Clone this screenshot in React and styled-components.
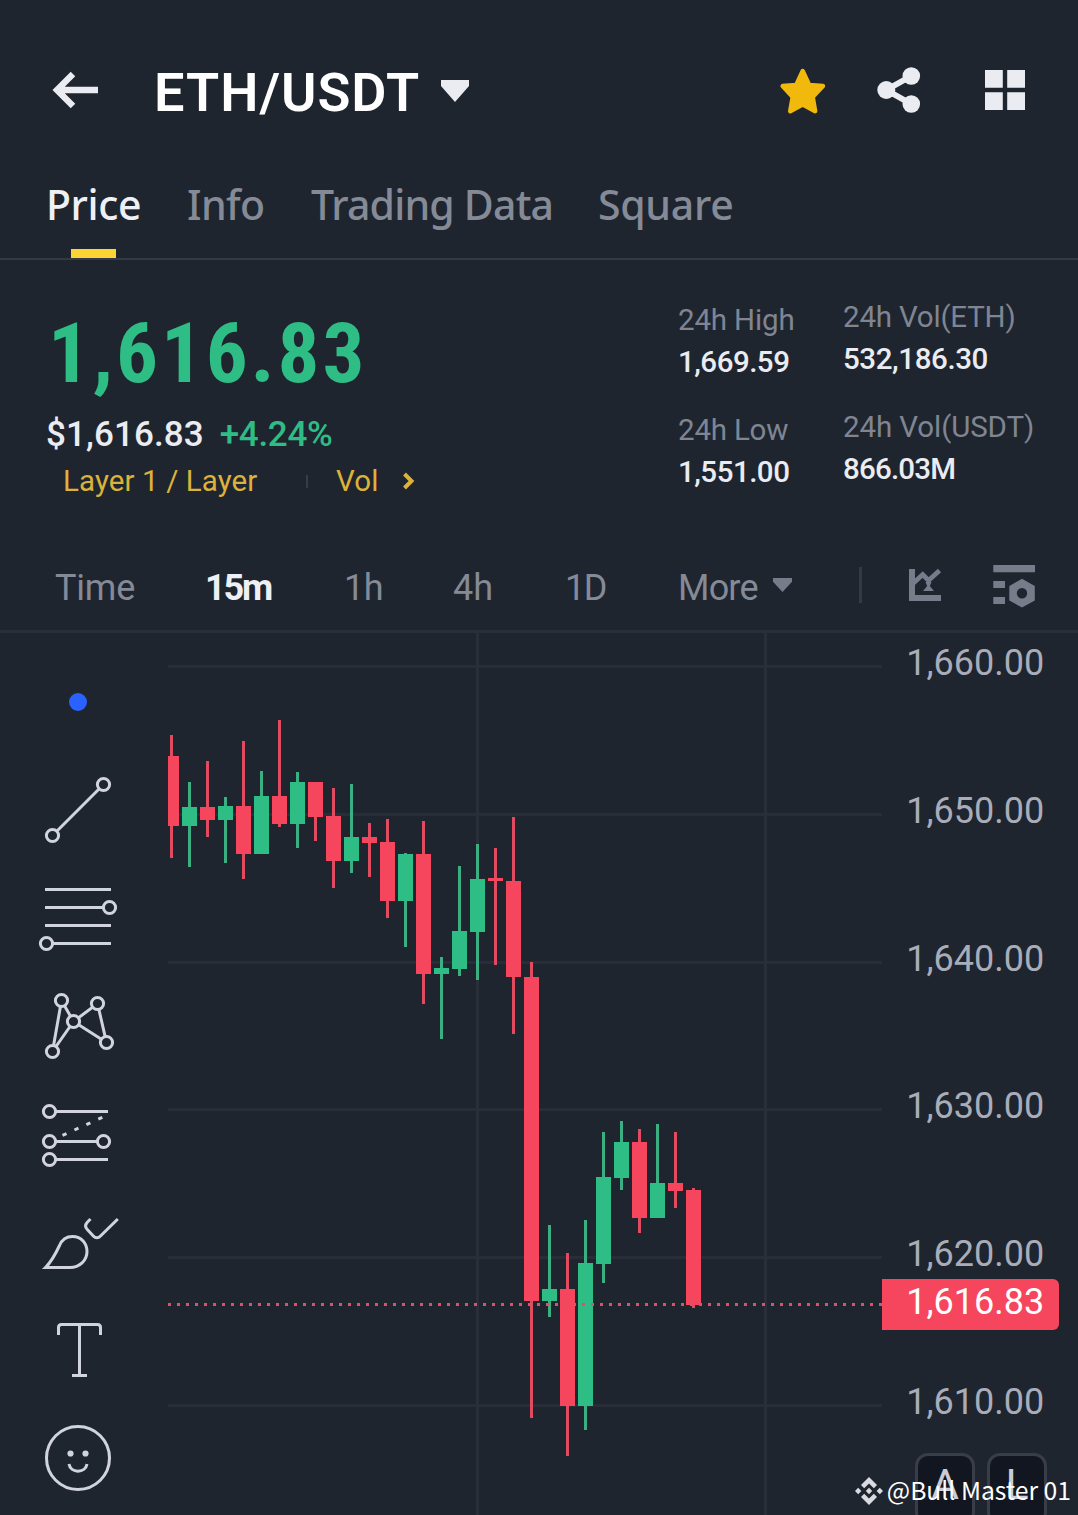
import styled, { createGlobalStyle } from 'styled-components';

const GlobalStyle = createGlobalStyle`
    * {
        box-sizing: border-box;
    }
    body {
        margin: 0;
        background-color: #1f252f;
        font-family: Roboto, 'Liberation Sans', sans-serif;
        color: #eaecf2;
        overflow: hidden;
    }
    svg {
        display: block;
        flex-shrink: 0;
    }
`;

const Page = styled.div`
    position: relative;
    width: 1078px;
    height: 1515px;
    overflow: hidden;
    background-color: #1f252f;
`;

/* header */
const Header = styled.header`
    display: flex;
    align-items: center;
    height: 182px;
    padding: 0 48px 0 48px;
`;

const Pair = styled.h1`
    margin: 3px 0 0 50px;
    width: 287px;
    font-size: 54px;
    line-height: 60px;
    font-weight: 600;
    letter-spacing: ${(props) => props.$spacing}px;
    color: #ffffff;
    white-space: nowrap;
`;

const HeaderActions = styled.div`
    display: flex;
    align-items: center;
    gap: 44px;
    margin-left: auto;
`;

/* tabs */
const TabBar = styled.nav`
    display: grid;
    grid-template-columns: 141px 124px 287px 140px;
    height: 78px;
    padding-left: 46px;
    border-bottom: 2px solid #343a45;
`;

const Tab = styled.div`
    display: flex;
    flex-direction: column;
    justify-content: space-between;
    align-items: center;
    justify-self: start;
    font-family: 'Noto Sans', sans-serif;
    font-size: 41px;
    line-height: 45px;
    font-weight: 500;
    letter-spacing: ${(props) => props.$spacing}px;
    white-space: nowrap;
    color: ${(props) => (props.$active ? '#eff0f6' : '#858a97')};

    &::after {
        content: '';
        width: 45px;
        height: 9px;
        background-color: ${(props) => (props.$active ? '#fcd535' : 'transparent')};
    }
`;

/* summary */
const Summary = styled.section`
    display: flex;
    height: 285px;
`;

const PriceBlock = styled.div`
    width: 678px;
    padding: 52px 0 0 46px;
`;

const LastPrice = styled.div`
    height: 84px;
    padding-left: 2px;
    font-size: 83px;
    line-height: 84px;
    font-weight: 700;
    font-stretch: 80%;
    letter-spacing: 2.9px;
    color: #2ebd85;
`;

const SubPrice = styled.div`
    display: flex;
    gap: 16px;
    margin-top: 13px;
    height: 49px;
    font-size: 35px;
    line-height: 51px;
    font-weight: 500;
    letter-spacing: 0.1px;
`;

const Change = styled.span`
    color: #2ebd85;
    letter-spacing: -0.3px;
`;

const TagRow = styled.div`
    display: flex;
    align-items: center;
    padding-left: 17px;
    height: 46px;
    font-size: 29.5px;
    color: #dcb23a;
`;

const Tag = styled.span`
    width: ${(props) => props.$width}px;
    line-height: 46px;
    letter-spacing: ${(props) => props.$spacing}px;
    white-space: nowrap;
`;

const TagDivider = styled.span`
    width: 2px;
    height: 13px;
    margin-right: 28px;
    background-color: #363c48;
`;

const StatColumn = styled.div`
    display: flex;
    flex-direction: column;
    gap: 26px;
    width: ${(props) => props.$width}px;
    padding-top: ${(props) => props.$top}px;
`;

const Stat = styled.div`
    font-size: 29.5px;
    line-height: 42px;
    white-space: nowrap;
`;

const StatLabel = styled.div`
    color: #7f8592;
    letter-spacing: ${(props) => props.$spacing}px;
`;

const StatValue = styled.div`
    font-weight: 500;
    letter-spacing: ${(props) => props.$spacing}px;
`;

/* intervals */
const IntervalBar = styled.div`
    display: grid;
    grid-template-columns: 150px 139px 109px 112px 113px 181px 50px 84px 43px;
    align-items: center;
    height: 88px;
    padding-left: 55px;
    border-bottom: 3px solid #2a2e39;

    & > svg {
        margin-bottom: 1px;
    }
`;

const Interval = styled.span`
    display: flex;
    align-items: center;
    gap: 15px;
    font-size: 36px;
    line-height: 44px;
    font-weight: ${(props) => (props.$active ? 700 : 400)};
    letter-spacing: ${(props) => props.$spacing}px;
    color: ${(props) => (props.$active ? '#eff0f6' : '#858a97')};

    & > svg {
        margin-bottom: 6px;
    }
`;

const BarDivider = styled.i`
    width: 3px;
    height: 36px;
    margin-bottom: 5px;
    background-color: #343944;
`;

/* chart */
const ChartArea = styled.section`
    display: flex;
    height: 882px;
`;

const ToolColumn = styled.div`
    display: flex;
    flex-direction: column;
    width: 168px;
    padding: 15px 0 0 24px;
`;

const PriceAxis = styled.div`
    position: relative;
    width: 196px;
    padding-top: 8px;
`;

const AxisLabel = styled.div`
    height: 147.8px;
    padding-left: 24.3px;
    font-size: 36px;
    line-height: 44px;
    color: #a9adb9;
`;

const PriceTag = styled.div`
    position: absolute;
    left: 0;
    top: 646px;
    width: 177px;
    height: 51px;
    padding-left: 24.3px;
    border-radius: 0 6px 6px 0;
    background-color: #f6465d;
    font-size: 36px;
    line-height: 47px;
    color: #ffffff;
`;

const ScaleButtons = styled.div`
    position: absolute;
    left: 33px;
    top: 820px;
    display: flex;
    gap: 12px;
`;

const ScaleButton = styled.div`
    width: 60px;
    height: 72px;
    border: 3px solid #393d48;
    border-radius: 13px;
    background-color: #121620;
    text-align: center;
    font-size: 43px;
    line-height: 56px;
    font-weight: 400;
    color: #c9ccd6;
`;

const Watermark = styled.div`
    position: absolute;
    right: 7px;
    top: 1472px;
    display: flex;
    align-items: center;
    gap: 4px;
    font-family: 'Noto Sans CJK SC', sans-serif;
    font-size: 24.7px;
    line-height: 34px;
    color: #ffffff;
    white-space: nowrap;

    & > svg {
        margin-top: 4px;
    }
`;

// color, high, body top, body bottom, low
const candles = [
    ['r', 735, 756, 826, 858],
    ['g', 782, 807, 826, 867],
    ['r', 761, 807, 820, 837],
    ['g', 797, 806, 820, 863],
    ['r', 741, 806, 854, 879],
    ['g', 771, 796, 854, 854],
    ['r', 720, 796, 824, 827],
    ['g', 772, 782, 824, 848],
    ['r', 782, 782, 817, 841],
    ['r', 788, 816, 861, 888],
    ['g', 784, 837, 861, 873],
    ['r', 823, 837, 843, 877],
    ['r', 819, 842, 901, 918],
    ['g', 853, 854, 901, 947],
    ['r', 821, 854, 974, 1004],
    ['g', 957, 968, 974, 1039],
    ['g', 866, 931, 969, 976],
    ['g', 844, 879, 932, 980],
    ['r', 848, 878, 881, 965],
    ['r', 817, 881, 977, 1034],
    ['r', 962, 977, 1301, 1418],
    ['g', 1225, 1289, 1301, 1317],
    ['r', 1253, 1289, 1406, 1456],
    ['g', 1220, 1263, 1406, 1430],
    ['g', 1132, 1177, 1264, 1283],
    ['g', 1121, 1142, 1178, 1190],
    ['r', 1129, 1142, 1218, 1233],
    ['g', 1124, 1183, 1218, 1218],
    ['r', 1132, 1183, 1191, 1208],
    ['r', 1188, 1190, 1305, 1308],
];

const colors = { r: '#f6465d', g: '#2ebd85' };
const wickColors = { r: '#e04b5f', g: '#3caf82' };
const prices = ['1,660.00', '1,650.00', '1,640.00', '1,630.00', '1,620.00', '1,610.00'];
const gridRows = [665, 813, 961, 1108, 1256, 1404];

function BackIcon() {
    return (
        <svg width="56" height="60" viewBox="48 61 56 60" fill="none" stroke="#eaecf2" strokeWidth="6.4">
            <path d="M98 90H58M73 74L57 90L73 106" />
        </svg>
    );
}

function CaretIcon({ width, height, color }) {
    return (
        <svg width={width} height={height} viewBox="0 0 28 22" preserveAspectRatio="none" fill={color}>
            <path d="M0 0H28V6L14 22L0 6Z" />
        </svg>
    );
}

function StarIcon() {
    return (
        <svg width="52" height="60" viewBox="777 61 52 60">
            <path
                d="M802.7 71L809.2 84.9L823 86L812.7 97L815.2 111.2L802.7 104.6L790.2 111.2L792.7 97L782.6 86L796.2 84.9Z"
                fill="#f0b90b"
                stroke="#f0b90b"
                strokeWidth="4.4"
                strokeLinejoin="round"
            />
        </svg>
    );
}

function ShareIcon() {
    return (
        <svg width="52" height="60" viewBox="873 61 52 60" fill="#eaecf2">
            <path d="M911.3 76L886.3 90L911.3 104" fill="none" stroke="#eaecf2" strokeWidth="6" />
            <circle cx="911.3" cy="76" r="8.8" />
            <circle cx="886.3" cy="90" r="9" />
            <circle cx="911.3" cy="104" r="8.8" />
        </svg>
    );
}

function GridIcon() {
    return (
        <svg width="61" height="60" viewBox="969 61 61 60" fill="#eaecf2">
            <path d="M985 70H1002.8V87.7H985ZM1007.2 70H1025V87.7H1007.2ZM985 92.2H1002.8V110H985ZM1007.2 92.2H1025V110H1007.2Z" />
        </svg>
    );
}

function IndicatorIcon() {
    return (
        <svg width="34" height="44" viewBox="909 565 34 44" fill="#777c8b">
            <path d="M909 569H915V595H941V601H909Z" />
            <path d="M913 583.5L922.7 574.5L928.5 580.5L939.5 570.5" fill="none" stroke="#777c8b" strokeWidth="4.8" />
            <path d="M925.5 582H931.5L929.8 586L934 591H923L927.2 586Z" />
        </svg>
    );
}

function SettingsIcon() {
    return (
        <svg width="43" height="44" viewBox="993 565 43 44" fill="#777c8b">
            <path d="M993.3 565H1035V572.3H993.3ZM993.3 581H1005V588H993.3ZM993.3 597H1005V604H993.3Z" />
            <path
                fillRule="evenodd"
                d="M1022 578.7L1034.8 586V600.5L1022 607.6L1009.3 600.5V586ZM1022 588A5.2 5.2 0 1 0 1022 598.4A5.2 5.2 0 1 0 1022 588Z"
            />
        </svg>
    );
}

function Tool({ children }) {
    return (
        <svg width="108" height="108" viewBox="0 0 108 108" fill="none" stroke="#d1d4de" strokeWidth="3">
            {children}
        </svg>
    );
}

function Knob({ x, y }) {
    return <circle cx={x} cy={y} r="6.1" fill="#1f252f" />;
}

function DrawingTools() {
    return (
        <ToolColumn>
            <Tool>
                <circle cx="54" cy="54" r="9" fill="#2962ff" stroke="none" />
            </Tool>
            <Tool>
                <path d="M28.5 79.5L79.5 28.5" />
                <Knob x="79.5" y="28.5" />
                <Knob x="28.5" y="79.5" />
            </Tool>
            <Tool>
                <path d="M21 25.5H87M21 43.5H85M21 61.5H87M22 79.5H87" />
                <Knob x="85.5" y="43.5" />
                <Knob x="22.5" y="79.5" />
            </Tool>
            <Tool>
                <path d="M28.5 79.5L37.5 28.5L49.5 49.5ZM49.5 49.5L73.5 31.5L82.5 70.5Z" />
                <Knob x="28.5" y="79.5" />
                <Knob x="37.5" y="28.5" />
                <Knob x="49.5" y="49.5" />
                <Knob x="73.5" y="31.5" />
                <Knob x="82.5" y="70.5" />
            </Tool>
            <Tool>
                <path d="M25.5 31.5H84M25.5 61.5H79.5M25.5 79.5H84" />
                <path d="M38.5 55.4L80 36.6" strokeDasharray="4.4 8.7" />
                <Knob x="25.5" y="31.5" />
                <Knob x="25.5" y="61.5" />
                <Knob x="79.5" y="61.5" />
                <Knob x="25.5" y="79.5" />
            </Tool>
            <Tool>
                <path d="M21.5 79.5C28 73 32 65 35.5 57.5C38 51.5 42 48.5 48.5 48.5C57.5 48.5 63 55.5 63 63.5C63 72.5 55.5 79.5 46 79.5Z" />
                <path d="M66.5 31L63.3 34.2C61 36.8 61 39.2 63.3 41.5L69.3 48C71.5 50.4 74.3 50.4 76.5 48L93.8 31" />
            </Tool>
            <Tool>
                <path d="M34.5 39V31.5Q34.5 28.5 37.5 28.5H73.5Q76.5 28.5 76.5 31.5V39M55.5 28.5V79.5M48 79.5H63" />
            </Tool>
            <Tool>
                <circle cx="54" cy="54" r="31.5" />
                <circle cx="46.5" cy="49.5" r="3.1" fill="#d1d4de" stroke="none" />
                <circle cx="61.5" cy="49.5" r="3.1" fill="#d1d4de" stroke="none" />
                <path d="M45 60C46.5 69.5 61.5 69.5 63 60" />
            </Tool>
        </ToolColumn>
    );
}

function CandleChart() {
    return (
        <svg width="714" height="882" viewBox="168 633 714 882" shapeRendering="crispEdges">
            {gridRows.map((y) => (
                <rect key={y} x="168" y={y} width="714" height="3" fill="#282d37" />
            ))}
            <rect x="476" y="633" width="3" height="882" fill="#292e38" />
            <rect x="764" y="633" width="3" height="882" fill="#292e38" />
            {candles.map(([kind, high, top, bottom, low], index) => {
                const x = 164 + index * 18;
                return (
                    <g key={index}>
                        <rect x={x + 6} y={high} width="3" height={low - high} fill={wickColors[kind]} />
                        <rect x={x} y={top} width="15" height={bottom - top} fill={colors[kind]} />
                    </g>
                );
            })}
            <path d="M168 1304.5H882" stroke="#d9546a" strokeWidth="3" strokeDasharray="3 6" />
        </svg>
    );
}

function WatermarkLogo() {
    return (
        <svg width="28" height="28" viewBox="0 0 28 28" fill="#d9dbe0">
            <path d="M14 0L22 8L18.8 11.2L14 6.4L9.2 11.2L6 8Z" />
            <path d="M14 28L22 20L18.8 16.8L14 21.6L9.2 16.8L6 20Z" />
            <path d="M14 10.8L17.2 14L14 17.2L10.8 14Z" />
            <path d="M3.2 10.8L6.4 14L3.2 17.2L0 14Z" />
            <path d="M24.8 10.8L28 14L24.8 17.2L21.6 14Z" />
        </svg>
    );
}

function App() {
    return (
        <>
            <GlobalStyle />
            <Page>
                <Header>
                    <BackIcon />
                    <Pair $spacing={1}>ETH/USDT</Pair>
                    <CaretIcon width={28} height={22} color="#eaecf2" />
                    <HeaderActions>
                        <StarIcon />
                        <ShareIcon />
                        <GridIcon />
                    </HeaderActions>
                </Header>
                <TabBar>
                    <Tab $active $spacing={-0.4}>Price</Tab>
                    <Tab $spacing={-0.6}>Info</Tab>
                    <Tab $spacing={-0.8}>Trading Data</Tab>
                    <Tab $spacing={-0.3}>Square</Tab>
                </TabBar>
                <Summary>
                    <PriceBlock>
                        <LastPrice>1,616.83</LastPrice>
                        <SubPrice>
                            <span>$1,616.83</span>
                            <Change>+4.24%</Change>
                        </SubPrice>
                        <TagRow>
                            <Tag $width={243} $spacing={0.1}>Layer 1 / Layer</Tag>
                            <TagDivider />
                            <Tag $width={67} $spacing={0.2}>Vol</Tag>
                            <svg width="12" height="18" viewBox="0 0 12 18" fill="none" stroke="#dcb23a" strokeWidth="4">
                                <path d="M1.5 2L8.5 9L1.5 16" />
                            </svg>
                        </TagRow>
                    </PriceBlock>
                    <StatColumn $width={165} $top={39}>
                        <Stat>
                            <StatLabel $spacing={-0.15}>24h High</StatLabel>
                            <StatValue $spacing={-0.5}>1,669.59</StatValue>
                        </Stat>
                        <Stat>
                            <StatLabel $spacing={-0.2}>24h Low</StatLabel>
                            <StatValue $spacing={-0.5}>1,551.00</StatValue>
                        </Stat>
                    </StatColumn>
                    <StatColumn $width={220} $top={36}>
                        <Stat>
                            <StatLabel $spacing={-0.2}>24h Vol(ETH)</StatLabel>
                            <StatValue $spacing={-0.4}>532,186.30</StatValue>
                        </Stat>
                        <Stat>
                            <StatLabel $spacing={-0.1}>24h Vol(USDT)</StatLabel>
                            <StatValue $spacing={-0.8}>866.03M</StatValue>
                        </Stat>
                    </StatColumn>
                </Summary>
                <IntervalBar>
                    <Interval $spacing={-0.2}>Time</Interval>
                    <Interval $active $spacing={-2.2}>15m</Interval>
                    <Interval $spacing={-0.5}>1h</Interval>
                    <Interval $spacing={0}>4h</Interval>
                    <Interval $spacing={-1.4}>1D</Interval>
                    <Interval $spacing={-0.8}>
                        More
                        <CaretIcon width={19} height={14} color="#777c8b" />
                    </Interval>
                    <BarDivider />
                    <IndicatorIcon />
                    <SettingsIcon />
                </IntervalBar>
                <ChartArea>
                    <DrawingTools />
                    <CandleChart />
                    <PriceAxis>
                        {prices.map((price) => (
                            <AxisLabel key={price}>{price}</AxisLabel>
                        ))}
                        <PriceTag>1,616.83</PriceTag>
                        <ScaleButtons>
                            <ScaleButton>A</ScaleButton>
                            <ScaleButton>L</ScaleButton>
                        </ScaleButtons>
                    </PriceAxis>
                </ChartArea>
                <Watermark>
                    <WatermarkLogo />
                    @Bull Master 01
                </Watermark>
            </Page>
        </>
    );
}

export default App;
